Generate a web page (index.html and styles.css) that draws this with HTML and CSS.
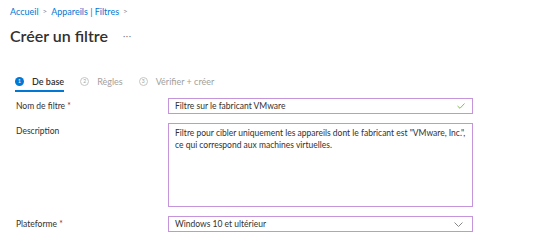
FILE: index.html
```html
<!DOCTYPE html>
<html lang="fr">
    <head>
        <meta charset="UTF-8" />
        <title>Créer un filtre</title>
        <link rel="stylesheet" href="styles.css">
    </head>
    <body>
        <nav class="breadcrumb">
            <a href="#">Accueil</a>
            <span class="sep">&gt;</span>
            <a href="#">Appareils | Filtres</a>
            <span class="sep">&gt;</span>
        </nav>
        <div class="title-row">
            <h1>Créer un filtre</h1>
            <span class="more">···</span>
        </div>

        <div class="steps">
            <div class="step active">
                <span class="num">1</span>
                De base
            </div>
            <div class="step">
                <span class="num">2</span>
                Règles
            </div>
            <div class="step">
                <span class="num">3</span>
                Vérifier + créer
            </div>
        </div>

        <div class="form">
            <div class="row">
                <label>Nom de filtre <span class="req">*</span></label>
                <div class="field">
                    Filtre sur le fabricant VMware
                    <svg class="check" width="8" height="6" viewBox="0 0 8 6" fill="none" stroke="#7dc24a" stroke-width="1">
                        <polyline points="0.5,3 3,5.3 7.5,0.5" />
                    </svg>
                </div>
            </div>
            <div class="row">
                <label>Description</label>
                <div class="field area">Filtre pour cibler uniquement les appareils dont le fabricant est "VMware, Inc.", ce qui correspond aux machines virtuelles.</div>
            </div>
            <div class="row">
                <label>Plateforme <span class="req">*</span></label>
                <div class="field">
                    Windows 10 et ultérieur
                    <svg class="chevron" width="9" height="5" viewBox="0 0 9 5" fill="none" stroke="#8a8886" stroke-width="1">
                        <polyline points="0.5,0.5 4.5,4.5 8.5,0.5" />
                    </svg>
                </div>
            </div>
        </div>
    </body>
</html>
```

FILE: styles.css
```css
body {
    font-family: Lato, "Open Sans", Arial, sans-serif;
    margin: 0;
    padding: 4px 10px 0 10px;
    color: #323130;
    background: #fff;
    font-size: 8.5px;
}
.breadcrumb {
    display: flex;
    align-items: center;
    gap: 4px;
    height: 14px;
    font-size: 9px;
}
.breadcrumb a {
    color: #0078d4;
    text-decoration: none;
}
.breadcrumb .sep {
    color: #8a8886;
    font-size: 8px;
}
.title-row {
    display: flex;
    align-items: center;
    margin-top: 7px;
    height: 20px;
}
h1 {
    margin: 0;
    font-size: 16px;
    font-weight: 600;
}
.more {
    margin-left: 15px;
    color: #8a8886;
    font-size: 9px;
    letter-spacing: 0.5px;
}
.steps {
    display: flex;
    gap: 16px;
    margin-top: 27px;
    padding-left: 5px;
}
.step {
    display: flex;
    align-items: center;
    gap: 8px;
    height: 18px;
    color: #a19f9d;
    font-size: 9px;
    border-bottom: 2px solid transparent;
}
.step .num {
    width: 7px;
    height: 7px;
    border: 1px solid #c8c6c4;
    border-radius: 50%;
    font-size: 5px;
    display: flex;
    align-items: center;
    justify-content: center;
}
.step.active {
    color: #323130;
    font-weight: 600;
    border-bottom-color: #0078d4;
}
.step.active .num {
    background: #0078d4;
    color: #fff;
    width: 9px;
    height: 9px;
    border: none;
}
.form {
    display: flex;
    flex-direction: column;
    gap: 9px;
    margin-top: 6px;
    padding-left: 6px;
}
.row {
    display: grid;
    grid-template-columns: 152px 305px;
}
label {
    font-size: 8.5px;
    padding-top: 3px;
}
.req {
    color: #a4262c;
}
.field {
    box-sizing: border-box;
    height: 16px;
    border: 1px solid #c595dc;
    padding: 2px 6px;
    font-size: 8.5px;
    line-height: 10px;
    display: flex;
    align-items: center;
    justify-content: space-between;
}
.field.area {
    display: block;
    height: 84px;
    padding: 3px 6px;
    line-height: 12px;
}
.check {
    margin-right: 1px;
}
.chevron {
    margin-right: 3px;
}
```
